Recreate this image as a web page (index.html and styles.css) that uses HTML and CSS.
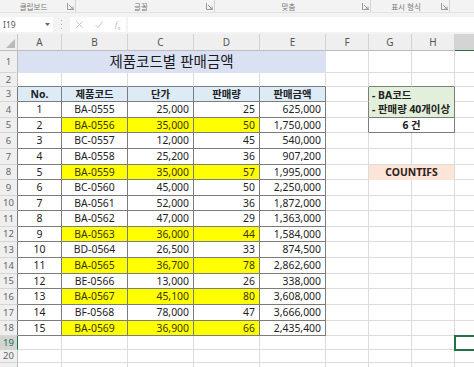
FILE: index.html
```html
<!DOCTYPE html>
<html lang="ko">
<head>
    <meta charset="UTF-8">
    <meta name="viewport" content="width=device-width, initial-scale=1.0">
    <title>제품코드별 판매금액</title>
    <link rel="stylesheet" href="styles.css">
</head>
<body>
    <!-- ribbon group captions -->
    <div class="groups">
        <div class="group g1"><span class="glabel">클립보드</span><svg class="launch" width="7" height="7" viewBox="0 0 7 7"><path d="M0.5 0V6.5H7M2 2L6 6M6 3.5V6H3.5" fill="none" stroke="#9a9a9a"/></svg></div>
        <div class="group g2"><span class="glabel">글꼴</span><svg class="launch" width="7" height="7" viewBox="0 0 7 7"><path d="M0.5 0V6.5H7M2 2L6 6M6 3.5V6H3.5" fill="none" stroke="#9a9a9a"/></svg></div>
        <div class="group g3"><span class="glabel">맞춤</span><svg class="launch" width="7" height="7" viewBox="0 0 7 7"><path d="M0.5 0V6.5H7M2 2L6 6M6 3.5V6H3.5" fill="none" stroke="#9a9a9a"/></svg></div>
        <div class="group g4"><span class="glabel">표시 형식</span><svg class="launch" width="7" height="7" viewBox="0 0 7 7"><path d="M0.5 0V6.5H7M2 2L6 6M6 3.5V6H3.5" fill="none" stroke="#9a9a9a"/></svg></div>
    </div>

    <!-- name box + formula bar -->
    <div class="fbar">
        <div class="namebox">
            <span>I19</span>
            <svg width="5" height="3" viewBox="0 0 5 3"><path d="M0 0H5L2.5 3Z" fill="#666"/></svg>
        </div>
        <svg class="grip" width="2" height="9" viewBox="0 0 2 9"><rect y="0" width="1" height="1" fill="#aaa"/><rect y="4" width="1" height="1" fill="#aaa"/><rect y="8" width="1" height="1" fill="#aaa"/></svg>
        <div class="fbtns">
            <svg width="7" height="7" viewBox="0 0 7 7"><path d="M0.5 0.5L6.5 6.5M6.5 0.5L0.5 6.5" stroke="#c4c4c4"/></svg>
            <svg width="8" height="7" viewBox="0 0 8 7"><path d="M0.5 4L3 6.5L7.5 0.5" fill="none" stroke="#c4c4c4"/></svg>
            <span class="fx"><i>f</i><sub>x</sub></span>
        </div>
        <div class="finput"></div>
    </div>

    <div class="sheet">
        <table>
            <colgroup>
                <col class="w-rh">
                <col class="w-a">
                <col class="w-b"><col class="w-b"><col class="w-b"><col class="w-b">
                <col class="w-a"><col class="w-a"><col class="w-a"><col class="w-a">
            </colgroup>
            <tr class="h17">
                <th class="corner"><svg width="9" height="9" viewBox="0 0 9 9"><path d="M9 0V9H0Z" fill="#b9b9b9"/></svg></th>
                <th class="ch">A</th><th class="ch">B</th><th class="ch">C</th><th class="ch">D</th><th class="ch">E</th>
                <th class="ch">F</th><th class="ch">G</th><th class="ch">H</th><th class="ch sel"></th>
            </tr>
            <tr class="h22">
                <th class="rh">1</th>
                <td class="title" colspan="5">제품코드별 판매금액</td>
                <td></td><td></td><td></td><td></td>
            </tr>
            <tr class="h14">
                <th class="rh">2</th>
                <td class="tt"></td><td class="tt"></td><td class="tt"></td><td class="tt"></td><td class="tt"></td>
                <td></td><td class="tt"></td><td class="tt"></td><td></td>
            </tr>
            <tr class="h15">
                <th class="rh tl">3</th>
                <td class="t hd">No.</td><td class="t hd">제품코드</td><td class="t hd">단가</td><td class="t hd">판매량</td><td class="t hd">판매금액</td>
                <td class="bl"></td>
                <td class="t note" colspan="2" rowspan="2">- BA코드<br>- 판매량 40개이상</td>
                <td></td>
            </tr>
            <tr class="h16">
                <th class="rh tl">4</th>
                <td class="t c">1</td><td class="t c">BA-0555</td><td class="t r">25,000</td><td class="t r">25</td><td class="t r">625,000</td>
                <td class="bl"></td><td></td>
            </tr>
            <tr class="h15">
                <th class="rh tl">5</th>
                <td class="t c">2</td><td class="t c y">BA-0556</td><td class="t r y">35,000</td><td class="t r y">50</td><td class="t r">1,750,000</td>
                <td class="bl"></td><td class="t count" colspan="2">6 건</td><td></td>
            </tr>
            <tr class="h16">
                <th class="rh tl">6</th>
                <td class="t c">3</td><td class="t c">BC-0557</td><td class="t r">12,000</td><td class="t r">45</td><td class="t r">540,000</td>
                <td></td><td></td><td></td><td></td>
            </tr>
            <tr class="h16">
                <th class="rh tl">7</th>
                <td class="t c">4</td><td class="t c">BA-0558</td><td class="t r">25,200</td><td class="t r">36</td><td class="t r">907,200</td>
                <td></td><td></td><td></td><td></td>
            </tr>
            <tr class="h15">
                <th class="rh tl">8</th>
                <td class="t c">5</td><td class="t c y">BA-0559</td><td class="t r y">35,000</td><td class="t r y">57</td><td class="t r">1,995,000</td>
                <td></td><td class="func" colspan="2">COUNTIFS</td><td></td>
            </tr>
            <tr class="h16">
                <th class="rh tl">9</th>
                <td class="t c">6</td><td class="t c">BC-0560</td><td class="t r">45,000</td><td class="t r">50</td><td class="t r">2,250,000</td>
                <td></td><td></td><td></td><td></td>
            </tr>
            <tr class="h15">
                <th class="rh tl">10</th>
                <td class="t c">7</td><td class="t c">BA-0561</td><td class="t r">52,000</td><td class="t r">36</td><td class="t r">1,872,000</td>
                <td></td><td></td><td></td><td></td>
            </tr>
            <tr class="h16">
                <th class="rh tl">11</th>
                <td class="t c">8</td><td class="t c">BA-0562</td><td class="t r">47,000</td><td class="t r">29</td><td class="t r">1,363,000</td>
                <td></td><td></td><td></td><td></td>
            </tr>
            <tr class="h15">
                <th class="rh tl">12</th>
                <td class="t c">9</td><td class="t c y">BA-0563</td><td class="t r y">36,000</td><td class="t r y">44</td><td class="t r">1,584,000</td>
                <td></td><td></td><td></td><td></td>
            </tr>
            <tr class="h16">
                <th class="rh tl">13</th>
                <td class="t c">10</td><td class="t c">BD-0564</td><td class="t r">26,500</td><td class="t r">33</td><td class="t r">874,500</td>
                <td></td><td></td><td></td><td></td>
            </tr>
            <tr class="h16">
                <th class="rh tl">14</th>
                <td class="t c">11</td><td class="t c y">BA-0565</td><td class="t r y">36,700</td><td class="t r y">78</td><td class="t r">2,862,600</td>
                <td></td><td></td><td></td><td></td>
            </tr>
            <tr class="h15">
                <th class="rh tl">15</th>
                <td class="t c">12</td><td class="t c">BE-0566</td><td class="t r">13,000</td><td class="t r">26</td><td class="t r">338,000</td>
                <td></td><td></td><td></td><td></td>
            </tr>
            <tr class="h16">
                <th class="rh tl">16</th>
                <td class="t c">13</td><td class="t c y">BA-0567</td><td class="t r y">45,100</td><td class="t r y">80</td><td class="t r">3,608,000</td>
                <td></td><td></td><td></td><td></td>
            </tr>
            <tr class="h16">
                <th class="rh tl">17</th>
                <td class="t c">14</td><td class="t c">BF-0568</td><td class="t r">78,000</td><td class="t r">47</td><td class="t r">3,666,000</td>
                <td></td><td></td><td></td><td></td>
            </tr>
            <tr class="h15">
                <th class="rh tl">18</th>
                <td class="t c">15</td><td class="t c y">BA-0569</td><td class="t r y">36,900</td><td class="t r y">66</td><td class="t r">2,435,400</td>
                <td></td><td></td><td></td><td></td>
            </tr>
            <tr class="h14">
                <th class="rh sel">19</th>
                <td></td><td></td><td></td><td></td><td></td><td></td><td></td><td></td><td class="active"></td>
            </tr>
            <tr class="h13">
                <th class="rh">20</th>
                <td></td><td></td><td></td><td></td><td></td><td></td><td></td><td></td><td></td>
            </tr>
            <tr class="h13">
                <th class="rh"></th>
                <td></td><td></td><td></td><td></td><td></td><td></td><td></td><td></td><td></td>
            </tr>
        </table>
    </div>
</body>
</html>
```

FILE: styles.css
```css
body {
    margin: 0;
    width: 474px;
    height: 367px;
    overflow: hidden;
    background: #fff;
    font-family: "Noto Sans", "Noto Sans CJK KR", sans-serif;
    color: #222;
}

/* ribbon captions */
.groups {
    display: flex;
    height: 12px;
    background: #f3f3f3;
    border-bottom: 1px solid #e2e2e2;
}
.group {
    display: flex;
    align-items: center;
    padding-right: 1px;
    border-right: 1px solid #d4d4d4;
}
.g1 { width: 74px; }
.g2 { width: 137px; }
.g3 { width: 154px; }
.g4 { width: 77px; }
.glabel {
    flex: 1;
    text-align: center;
    font-size: 7.5px;
    color: #777;
    font-family: "Noto Sans CJK KR", sans-serif;
}
.launch { display: block; }

/* formula bar */
.fbar {
    display: flex;
    align-items: stretch;
    height: 15px;
    padding: 4px 0 2px;
    background: #f3f3f3;
}
.namebox {
    width: 47px;
    padding: 0 3px;
    display: flex;
    align-items: center;
    justify-content: space-between;
    background: #fff;
    font-size: 8.5px;
    color: #555;
}
.grip {
    align-self: center;
    margin: 0 7px 0 8px;
}
.fbtns {
    width: 50px;
    padding-left: 6px;
    display: flex;
    align-items: center;
    gap: 12px;
    background: #fff;
}
.fx {
    font-family: "Liberation Serif", serif;
    font-size: 9px;
    color: #b8b8b8;
}
.fx sub { font-size: 6px; }
.finput {
    flex: 1;
    margin-left: 2px;
    background: #fff;
}

/* sheet grid */
.sheet {
    width: 474px;
    overflow: hidden;
}
table {
    border-collapse: separate;
    border-spacing: 0;
    table-layout: fixed;
    width: 498px;
}
.w-rh { width: 18px; }
.w-a { width: 43px; }
.w-b { width: 66px; }
col.w-a:nth-child(2) { width: 44px; }

.h13 { height: 13px; }
.h14 { height: 14px; }
.h15 { height: 15px; }
.h16 { height: 16px; }
.h17 { height: 17px; }
.h22 { height: 22px; }

td, th {
    padding: 0 4px;
    border-right: 1px solid #dcdcdc;
    border-bottom: 1px solid #dcdcdc;
    white-space: nowrap;
    overflow: hidden;
    font-size: 10.4px;
    line-height: 1;
    font-weight: normal;
    vertical-align: middle;
}

.corner {
    padding: 0;
    background: #efefef;
    border-right-color: #c8c8c8;
    border-bottom-color: #bdbdbd;
    text-align: right;
    vertical-align: bottom;
}
.corner svg { display: block; margin: 0 2px 2px auto; }
.ch {
    background: #efefef;
    color: #555;
    font-size: 10px;
    border-right-color: #d2d2d2;
    border-bottom-color: #bdbdbd;
}
.rh {
    padding: 0;
    background: #efefef;
    color: #666;
    font-size: 9.5px;
    border-right-color: #bdbdbd;
    border-bottom-color: #d6d6d6;
}
.ch.sel {
    background: #d4d4d4;
    border-bottom: 1px solid #217346;
}
.rh.sel {
    background: #d4d4d4;
    color: #217346;
    border-right: 1px solid #217346;
}

.title {
    background: #d9e1f2;
    border-right-color: #d9e1f2;
    border-bottom-color: #d9e1f2;
    text-align: center;
    font-size: 14.5px;
    font-family: "Noto Sans CJK KR", sans-serif;
    color: #1a1a1a;
}

/* bordered table */
.t { border-right-color: #7c7c7c; border-bottom-color: #7c7c7c; }
.tt { border-bottom-color: #7c7c7c; }
.tl { border-right-color: #7c7c7c; }
.bl { border-right-color: #7c7c7c; }
.c { text-align: center; }
.r { text-align: right; }
.hd {
    background: #ddebf7;
    text-align: center;
    font-weight: bold;
}
.y {
    background: #ffff00;
    color: #3b3300;
}

.note {
    background: #e2efda;
    font-weight: bold;
    line-height: 14px;
    padding-left: 3px;
}
.count {
    text-align: center;
    font-weight: bold;
}
.func {
    background: #fce4d6;
    border-bottom-color: #fce4d6;
    text-align: center;
    font-weight: bold;
    color: #2c2220;
}
.active {
    outline: 2px solid #217346;
    outline-offset: -1px;
}
```
